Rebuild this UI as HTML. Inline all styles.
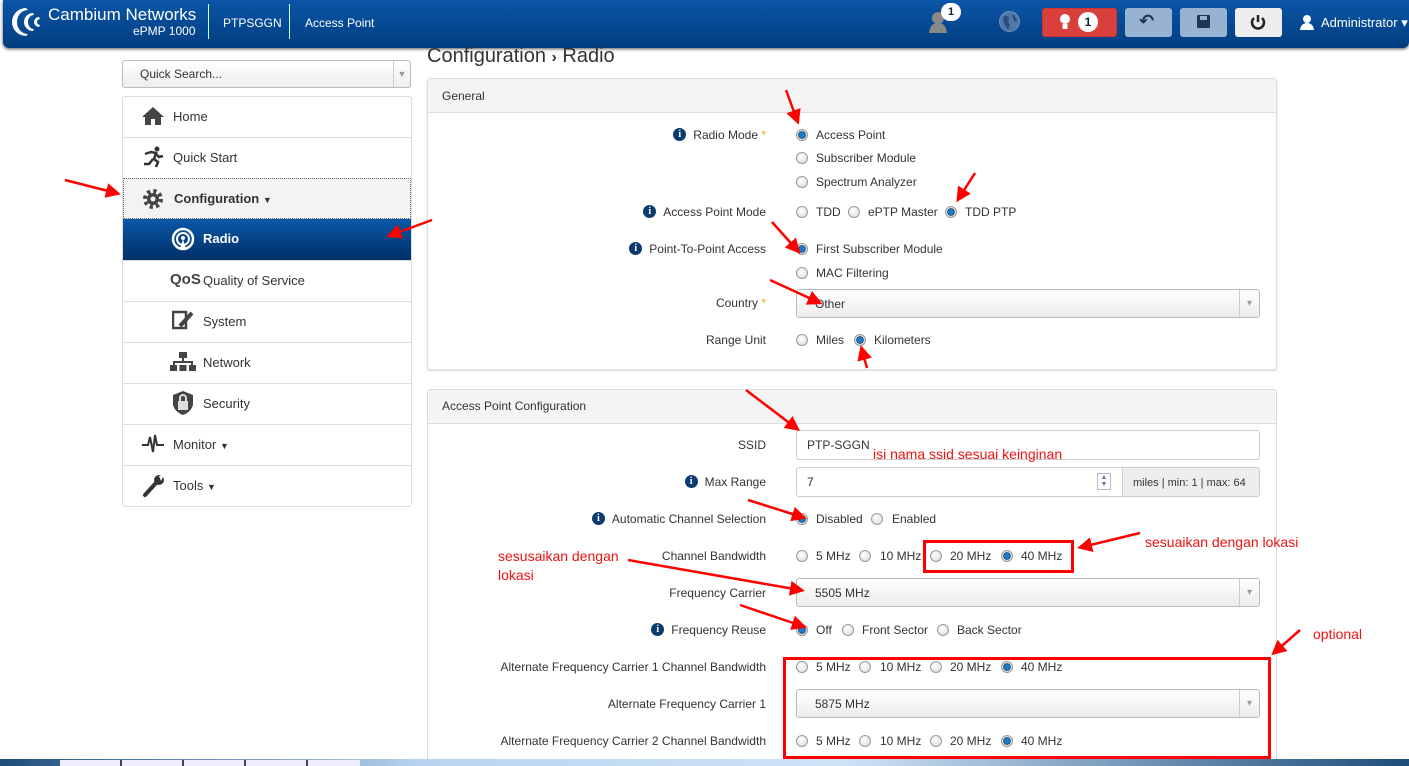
<!DOCTYPE html>
<html style="width:1409px;height:766px;overflow:hidden"><head><meta charset="utf-8"><style>
*{box-sizing:border-box;margin:0;padding:0}
body{width:1409px;height:766px;overflow:hidden;position:relative;background:#fff;font-family:"Liberation Sans",sans-serif;font-size:12px;color:#333}
.a{position:absolute;white-space:nowrap}
.hdr{position:absolute;left:3px;top:0;width:1406px;height:48px;background:linear-gradient(#0b56a7,#003d80);border-radius:0 0 6px 6px;box-shadow:0 1px 3px #555}
.w{color:#fff}
.btn{position:absolute;top:8px;height:29px;border-radius:3px}
.lbl{position:absolute;right:643px;line-height:16px;font-size:12px;color:#333;white-space:nowrap}
.t{position:absolute;line-height:16px;font-size:12px;color:#333;white-space:nowrap}
.r{position:absolute;width:12px;height:12px;border-radius:50%;border:1px solid #9a9a9a;background:radial-gradient(circle at 40% 35%,#fff,#d8d8d8)}
.r.on{background:radial-gradient(circle,#1d7cc7 0 2.5px,#0a3a66 3.5px,#ddd 4px,#eee)}
.i{display:inline-block;width:13px;height:13px;border-radius:50%;background:#0b3b6e;color:#fff;font:bold 10px/13px "Liberation Serif",serif;text-align:center;margin-right:7px;vertical-align:top;margin-top:1px}
.sel{position:absolute;left:796px;width:464px;height:29px;border:1px solid #bbb;border-radius:3px;background:linear-gradient(#fff,#ececec)}
.sel:after{content:"▾";position:absolute;right:0;top:0;width:19px;height:27px;border-left:1px solid #ccc;color:#999;font-size:10px;text-align:center;line-height:27px}
.mi{position:absolute;left:123px;width:288px;height:41px;border-top:1px solid #ddd;font-size:13px;line-height:40px;color:#333}
.red{color:#e11;font-size:14px}
.star{color:#f0a020}
</style></head><body>
<div class="hdr"></div>
<svg class="a" style="left:12px;top:6px" width="34" height="32" viewBox="0 0 34 32"><path d="M14 2 A14 14 0 0 0 14 30 L16 28 A11 12 0 0 1 16 4Z" fill="#fff"/><path d="M21 7 A9 9 0 0 0 21 25 L22 23 A6 7 0 0 1 22 9Z" fill="#fff"/><path d="M27 11 A5 5 0 0 0 27 21 L28 19 A3 3 0 0 1 28 13Z" fill="#fff"/></svg>
<div class="a w" style="left:48px;top:5px;font-size:17px">Cambium Networks</div>
<div class="a w" style="left:133px;top:24px;font-size:12px">ePMP 1000</div>
<div class="a" style="left:208px;top:4px;width:1px;height:35px;background:#cfe"></div>
<div class="a w" style="left:223px;top:16px;font-size:12px">PTPSGGN</div>
<div class="a" style="left:289px;top:4px;width:1px;height:35px;background:#cfe"></div>
<div class="a w" style="left:305px;top:16px;font-size:12px">Access Point</div>
<svg class="a" style="left:929px;top:10px" width="20" height="24"><circle cx="9" cy="8" r="6" fill="#888"/><path d="M0 23 Q1 13 9 13 Q17 13 18 23Z" fill="#888"/></svg>
<div class="a" style="left:941px;top:3px;width:20px;height:18px;border-radius:9px;background:#fff;color:#123;font:bold 11px/18px 'Liberation Sans';text-align:center">1</div>
<svg class="a" style="left:998px;top:10px" width="23" height="23"><circle cx="11.5" cy="11.5" r="10" fill="#4f77a8" stroke="#6d8fbd"/><path d="M6 6 Q10 5 11 9 Q9 12 12 15 L10 20 Q6 14 5 10Z M14 4 Q19 7 19 12 L16 11Z" fill="#2a4f80"/></svg>
<div class="btn" style="left:1042px;width:75px;background:#d9403c;border:1px solid #c33"></div>
<svg class="a" style="left:1059px;top:13px" width="12" height="18"><circle cx="6" cy="6" r="5" fill="#fff"/><rect x="3.5" y="11" width="5" height="5" fill="#fff"/></svg>
<div class="a" style="left:1078px;top:12px;width:20px;height:20px;border-radius:10px;background:#fff;color:#123;font:bold 12px/20px 'Liberation Sans';text-align:center">1</div>
<div class="btn" style="left:1125px;width:47px;background:#98b2d1"></div>
<div class="a" style="left:1139px;top:11px;font:bold 18px 'DejaVu Sans';color:#1f3550">↶</div>
<div class="btn" style="left:1180px;width:47px;background:#98b2d1"></div>
<svg class="a" style="left:1197px;top:15px" width="13" height="13"><rect width="13" height="13" rx="1" fill="#1f3550"/><rect x="3" y="1" width="7" height="4" fill="#98b2d1"/></svg>
<div class="btn" style="left:1235px;width:47px;background:#eee"></div>
<svg class="a" style="left:1250px;top:14px" width="16" height="16"><path d="M4 4 A6 6 0 1 0 12 4" stroke="#222" stroke-width="2.5" fill="none"/><path d="M8 1 V8" stroke="#222" stroke-width="2.5"/></svg>
<svg class="a" style="left:1300px;top:15px" width="14" height="15"><circle cx="7" cy="4" r="4" fill="#fff"/><path d="M0 15 Q1 8 7 8 Q13 8 14 15Z" fill="#fff"/></svg>
<div class="a w" style="left:1321px;top:15px;font-size:13px">Administrator ▾</div>

<!-- sidebar -->
<div class="a" style="left:122px;top:60px;width:289px;height:28px;border:1px solid #bbb;border-radius:3px;background:linear-gradient(#fff,#eee)"></div>
<div class="a" style="left:140px;top:67px;font-size:12px">Quick Search...</div>
<div class="a" style="left:393px;top:61px;width:17px;height:26px;border-left:1px solid #ccc;color:#999;font-size:9px;text-align:center;line-height:26px">▼</div>
<div class="a" style="left:122px;top:96px;width:290px;height:411px;border:1px solid #ddd;border-radius:3px"></div>
<div class="mi" style="top:96px;border-top:0;padding-left:50px;line-height:42px">Home</div>
<svg class="a" style="left:142px;top:106px" width="22" height="20"><path d="M11 1 L22 11 H19 V19 H13 V13 H9 V19 H3 V11 H0Z" fill="#444"/></svg>
<div class="mi" style="top:137px;padding-left:50px">Quick Start</div>
<svg class="a" style="left:142px;top:146px" width="22" height="22"><circle cx="15" cy="3" r="2.5" fill="#333"/><path d="M3 8 L9 6 L14 7 L12 13 L16 16 L14 21 M11 13 L7 18 L2 18 M14 8 L17 11 L21 10" stroke="#333" stroke-width="2.5" fill="none"/></svg>
<div class="mi" style="top:178px;padding-left:50px;background:#f3f3f3;border:1px dotted #666;font-weight:bold;color:#333">Configuration <span style="font-size:9px">▼</span></div>
<svg class="a" style="left:142px;top:188px" width="22" height="22" viewBox="0 0 22 22"><circle cx="11" cy="11" r="7.5" fill="none" stroke="#444" stroke-width="5" stroke-dasharray="3 2.9"/><circle cx="11" cy="11" r="6" fill="#444"/><circle cx="11" cy="11" r="2.5" fill="#f3f3f3"/></svg>
<div class="mi" style="top:219px;padding-left:80px;background:linear-gradient(#0a58a8,#002f66);color:#fff;font-weight:bold;border-top:0">Radio</div>
<svg class="a" style="left:171px;top:227px" width="24" height="24"><circle cx="12" cy="12" r="10" fill="none" stroke="#fff" stroke-width="2.5"/><circle cx="12" cy="12" r="6" fill="none" stroke="#fff" stroke-width="2"/><circle cx="12" cy="11" r="2" fill="#fff"/><path d="M9 22 L12 12 L15 22Z" fill="#fff"/></svg>
<div class="mi" style="top:260px;padding-left:80px">Quality of Service</div>
<div class="a" style="left:170px;top:271px;font:bold 15px 'Liberation Sans Narrow','Liberation Sans';color:#444">QoS</div>
<div class="mi" style="top:301px;padding-left:80px">System</div>
<svg class="a" style="left:172px;top:310px" width="22" height="20"><rect x="1" y="2" width="13" height="16" fill="none" stroke="#444" stroke-width="2.5"/><path d="M8 16 L20 3" stroke="#444" stroke-width="4"/></svg>
<div class="mi" style="top:342px;padding-left:80px">Network</div>
<svg class="a" style="left:170px;top:352px" width="26" height="19"><rect x="9" y="0" width="8" height="6" fill="#444"/><path d="M13 6V10M4 13V10H22V13" stroke="#444" stroke-width="2" fill="none"/><rect x="0" y="13" width="7" height="6" fill="#444"/><rect x="9.5" y="13" width="7" height="6" fill="#444"/><rect x="19" y="13" width="7" height="6" fill="#444"/></svg>
<div class="mi" style="top:383px;padding-left:80px">Security</div>
<svg class="a" style="left:173px;top:391px" width="20" height="24"><path d="M10 0 L20 4 V14 Q18 21 10 24 Q2 21 0 14 V4Z" fill="#444"/><rect x="5" y="10" width="10" height="9" fill="#ddd"/><path d="M7 10 V7 A3 3 0 0 1 13 7 V10" stroke="#ddd" stroke-width="2" fill="none"/></svg>
<div class="mi" style="top:424px;padding-left:50px">Monitor <span style="font-size:9px">▼</span></div>
<svg class="a" style="left:142px;top:433px" width="22" height="22"><path d="M0 12 H6 L8 4 L11 19 L13 2 L15 12 H22" stroke="#333" stroke-width="2" fill="none"/></svg>
<div class="mi" style="top:465px;padding-left:50px">Tools <span style="font-size:9px">▼</span></div>
<svg class="a" style="left:142px;top:474px" width="24" height="24"><path d="M3 21 L14 9" stroke="#333" stroke-width="4" stroke-linecap="round"/><circle cx="17" cy="6" r="5" fill="#333"/><path d="M17 2 L22 1 L19 7Z" fill="#fff"/></svg>

<!-- main -->
<div class="a" style="left:427px;top:45px;font-size:20px;color:#333">Configuration <span style="font-size:16px;font-weight:bold">›</span> Radio</div>

<div class="a" style="left:427px;top:78px;width:850px;height:292px;border:1px solid #ddd;border-radius:3px;box-shadow:0 1px 2px #ddd"></div>
<div class="a" style="left:428px;top:79px;width:848px;height:34px;background:#f4f4f4;border-bottom:1px solid #ddd"></div>
<div class="t" style="left:442px;top:88px">General</div>

<div class="lbl" style="top:127px"><span class="i">i</span>Radio Mode <span class="star">*</span></div>
<div class="r on" style="left:796px;top:129px"></div><div class="t" style="left:816px;top:127px">Access Point</div>
<div class="r" style="left:796px;top:152px"></div><div class="t" style="left:816px;top:150px">Subscriber Module</div>
<div class="r" style="left:796px;top:176px"></div><div class="t" style="left:816px;top:174px">Spectrum Analyzer</div>
<div class="lbl" style="top:204px"><span class="i">i</span>Access Point Mode</div>
<div class="r" style="left:796px;top:206px"></div><div class="t" style="left:816px;top:204px">TDD</div>
<div class="r" style="left:848px;top:206px"></div><div class="t" style="left:868px;top:204px">ePTP Master</div>
<div class="r on" style="left:945px;top:206px"></div><div class="t" style="left:965px;top:204px">TDD PTP</div>
<div class="lbl" style="top:241px"><span class="i">i</span>Point-To-Point Access</div>
<div class="r on" style="left:796px;top:243px"></div><div class="t" style="left:816px;top:241px">First Subscriber Module</div>
<div class="r" style="left:796px;top:267px"></div><div class="t" style="left:816px;top:265px">MAC Filtering</div>
<div class="lbl" style="top:295px">Country <span class="star">*</span></div>
<div class="sel" style="top:289px"></div><div class="t" style="left:815px;top:296px">Other</div>
<div class="lbl" style="top:332px">Range Unit</div>
<div class="r" style="left:796px;top:334px"></div><div class="t" style="left:816px;top:332px">Miles</div>
<div class="r on" style="left:854px;top:334px"></div><div class="t" style="left:874px;top:332px">Kilometers</div>

<div class="a" style="left:427px;top:389px;width:850px;height:376px;border:1px solid #ddd;border-bottom:0;border-radius:3px 3px 0 0"></div>
<div class="a" style="left:428px;top:390px;width:848px;height:34px;background:#f4f4f4;border-bottom:1px solid #ddd"></div>
<div class="t" style="left:442px;top:398px">Access Point Configuration</div>

<div class="lbl" style="top:437px">SSID</div>
<div class="a" style="left:796px;top:430px;width:464px;height:30px;border:1px solid #ccc;border-radius:3px"></div>
<div class="t" style="left:807px;top:437px">PTP-SGGN</div>
<div class="lbl" style="top:474px"><span class="i">i</span>Max Range</div>
<div class="a" style="left:796px;top:467px;width:464px;height:30px;border:1px solid #ccc;border-radius:3px"></div>
<div class="a" style="left:1122px;top:468px;width:137px;height:28px;background:#eee;border-left:1px solid #ccc"></div>
<div class="t" style="left:807px;top:474px">7</div>
<div class="a" style="left:1097px;top:473px;width:14px;height:17px;border:1px solid #bbb;font-size:7px;line-height:7px;text-align:center;color:#57a">▲<br>▼</div>
<div class="t" style="left:1133px;top:475px;font-size:11px">miles | min: 1 | max: 64</div>
<div class="lbl" style="top:511px"><span class="i">i</span>Automatic Channel Selection</div>
<div class="r on" style="left:796px;top:513px"></div><div class="t" style="left:816px;top:511px">Disabled</div>
<div class="r" style="left:871px;top:513px"></div><div class="t" style="left:892px;top:511px">Enabled</div>
<div class="lbl" style="top:548px">Channel Bandwidth</div>
<div class="r" style="left:796px;top:550px"></div><div class="t" style="left:816px;top:548px">5 MHz</div>
<div class="r" style="left:859px;top:550px"></div><div class="t" style="left:880px;top:548px">10 MHz</div>
<div class="r" style="left:930px;top:550px"></div><div class="t" style="left:950px;top:548px">20 MHz</div>
<div class="r on" style="left:1001px;top:550px"></div><div class="t" style="left:1021px;top:548px">40 MHz</div>
<div class="lbl" style="top:585px">Frequency Carrier</div>
<div class="sel" style="top:578px"></div><div class="t" style="left:815px;top:585px">5505 MHz</div>
<div class="lbl" style="top:622px"><span class="i">i</span>Frequency Reuse</div>
<div class="r on" style="left:796px;top:624px"></div><div class="t" style="left:816px;top:622px">Off</div>
<div class="r" style="left:842px;top:624px"></div><div class="t" style="left:862px;top:622px">Front Sector</div>
<div class="r" style="left:937px;top:624px"></div><div class="t" style="left:957px;top:622px">Back Sector</div>
<div class="lbl" style="top:659px">Alternate Frequency Carrier 1 Channel Bandwidth</div>
<div class="r" style="left:796px;top:661px"></div><div class="t" style="left:816px;top:659px">5 MHz</div>
<div class="r" style="left:859px;top:661px"></div><div class="t" style="left:880px;top:659px">10 MHz</div>
<div class="r" style="left:930px;top:661px"></div><div class="t" style="left:950px;top:659px">20 MHz</div>
<div class="r on" style="left:1001px;top:661px"></div><div class="t" style="left:1021px;top:659px">40 MHz</div>
<div class="lbl" style="top:696px">Alternate Frequency Carrier 1</div>
<div class="sel" style="top:689px"></div><div class="t" style="left:815px;top:696px">5875 MHz</div>
<div class="lbl" style="top:733px">Alternate Frequency Carrier 2 Channel Bandwidth</div>
<div class="r" style="left:796px;top:735px"></div><div class="t" style="left:816px;top:733px">5 MHz</div>
<div class="r" style="left:859px;top:735px"></div><div class="t" style="left:880px;top:733px">10 MHz</div>
<div class="r" style="left:930px;top:735px"></div><div class="t" style="left:950px;top:733px">20 MHz</div>
<div class="r on" style="left:1001px;top:735px"></div><div class="t" style="left:1021px;top:733px">40 MHz</div>

<!-- annotations -->
<div class="a" style="left:923px;top:540px;width:151px;height:33px;border:3px solid #f00"></div>
<div class="a" style="left:783px;top:657px;width:488px;height:102px;border:3px solid #f00"></div>
<div class="a red" style="left:873px;top:446px">isi nama ssid sesuai keinginan</div>
<div class="a red" style="left:1145px;top:534px">sesuaikan dengan lokasi</div>
<div class="a red" style="left:498px;top:547px;line-height:19px">sesusaikan dengan<br>lokasi</div>
<div class="a red" style="left:1313px;top:626px">optional</div>
<svg class="a" style="left:0;top:0" width="1409" height="766">
<defs><marker id="h" markerWidth="6" markerHeight="6" refX="4" refY="3" orient="auto"><path d="M0 0 L6 3 L0 6Z" fill="#f00"/></marker></defs>
<g stroke="#f00" stroke-width="2.5" marker-end="url(#h)">
<line x1="65" y1="180" x2="116" y2="193"/>
<line x1="432" y1="220" x2="391" y2="235"/>
<line x1="786" y1="90" x2="797" y2="120"/>
<line x1="975" y1="173" x2="959" y2="198"/>
<line x1="772" y1="222" x2="797" y2="250"/>
<line x1="770" y1="280" x2="818" y2="302"/>
<line x1="867" y1="368" x2="862" y2="350"/>
<line x1="746" y1="390" x2="796" y2="428"/>
<line x1="748" y1="500" x2="802" y2="517"/>
<line x1="1140" y1="533" x2="1082" y2="547"/>
<line x1="628" y1="560" x2="800" y2="590"/>
<line x1="740" y1="605" x2="802" y2="626"/>
<line x1="1300" y1="630" x2="1275" y2="652"/>
</g></svg>
<div class="a" style="left:0;top:759px;width:1409px;height:7px;background:linear-gradient(90deg,#1e4d7a,#b8d4f0 30%,#cfe3f7 60%,#1e4d7a)"></div>
<div class="a" style="left:60px;top:760px;width:300px;height:6px;background:repeating-linear-gradient(90deg,#eef 0 60px,#445 60px 62px)"></div>
</body></html>
